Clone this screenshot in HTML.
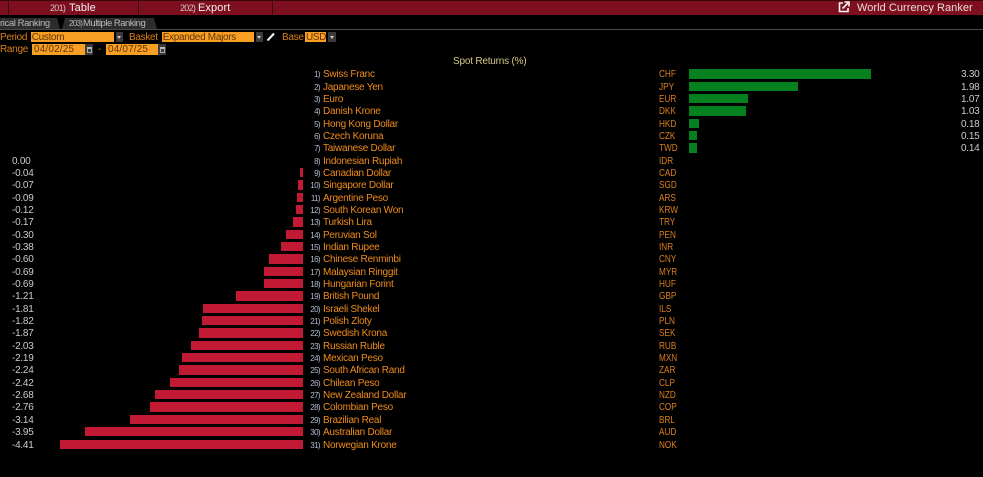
<!DOCTYPE html>
<html><head><meta charset="utf-8">
<style>
html,body{margin:0;padding:0;background:#000;}
#p{position:relative;width:983px;height:477px;overflow:hidden;background:#000;font-family:"Liberation Sans",sans-serif;font-size:10px;letter-spacing:-.25px;line-height:12px;white-space:nowrap;filter:blur(.25px);}
#p div,#p span{position:absolute;}
.l{color:#d9801a;letter-spacing:-.3px;}
.f{background:#f9a024;color:#5e3304;height:10.5px;line-height:12px;padding-left:1px;box-sizing:border-box;letter-spacing:-.3px;overflow:hidden;}
.d{background:#3a3a3a;width:7.5px;height:10.5px;}
.d:after{content:"";position:absolute;left:1.5px;top:4px;border-left:2.5px solid transparent;border-right:2.5px solid transparent;border-top:3px solid #ccc;}
.c{background:#3a3a3a;width:8px;height:10.5px;}
.c:after{content:"";position:absolute;left:1.5px;top:2.5px;width:3px;height:3px;border:1px solid #aaa;border-top:2px solid #bbb;}
.r{left:0;width:983px;height:12px;}
.n{left:303px;width:17px;text-align:right;color:#aebbd0;font-size:8px;letter-spacing:-.6px;top:-1px;}
.t{left:323px;color:#ef8c1c;top:-1px;}
.s{left:659px;color:#d97f1e;top:-1px;transform:scaleX(.82);transform-origin:0 0;letter-spacing:0;}
.vn{left:12px;color:#c8ccd0;top:-1px;}
.vp{left:961px;color:#c8ccd0;top:-1px;}
.b{top:-1px;height:9.4px;}
.R{background:#c21a35;right:680.3px;}
.G{background:#05801f;left:689px;}
</style></head><body><div id="p">
<div style="left:0;top:0;width:983px;height:15px;background:#7d0f1e;border-top:1px solid #3a060c;box-sizing:border-box;"></div>
<div style="left:8px;top:0;width:1px;height:15px;background:#40060e;"></div>
<div style="left:138px;top:0;width:1px;height:15px;background:#40060e;"></div>
<div style="left:272px;top:0;width:1px;height:15px;background:#40060e;"></div>
<span style="left:50px;top:2px;color:#d8c0c4;font-size:9px;letter-spacing:-.7px;">201)</span>
<span style="left:69px;top:2px;color:#f2f2f2;font-size:11px;letter-spacing:.1px;">Table</span>
<span style="left:180px;top:2px;color:#d8c0c4;font-size:9px;letter-spacing:-.7px;">202)</span>
<span style="left:198px;top:2px;color:#f2f2f2;font-size:11px;letter-spacing:.1px;">Export</span>
<svg style="position:absolute;left:838px;top:1px" width="12" height="12" viewBox="0 0 12 12"><path d="M5 2H1.5V10.5H10V7" fill="none" stroke="#f4f4f4" stroke-width="1.6"/><path d="M4.5 7.5L10 2M6.5 1H11V5.5" fill="none" stroke="#f4f4f4" stroke-width="1.6"/></svg>
<span style="left:857px;top:2px;color:#e8dcdc;font-size:11px;letter-spacing:.05px;">World Currency Ranker</span>
<div style="left:0;top:29px;width:983px;height:1px;background:#4a4a4a;"></div>
<div style="left:0;top:18px;width:60px;height:11px;background:#2c2c2c;clip-path:polygon(0 0,57px 0,60px 11px,0 11px);"></div>
<div style="left:62px;top:18px;width:95px;height:11px;background:#2c2c2c;clip-path:polygon(3px 0,92px 0,95px 11px,0 11px);"></div>
<span style="left:0;top:18px;color:#b8b8b8;font-size:9.5px;letter-spacing:-.4px;">rical Ranking</span>
<span style="left:69px;top:18px;color:#b4b4b4;font-size:8px;letter-spacing:-.7px;">203)</span>
<span style="left:83px;top:18px;color:#b8b8b8;font-size:9.5px;letter-spacing:-.5px;">Multiple Ranking</span>
<span class="l" style="left:0;top:31.5px;">Period</span>
<div class="f" style="left:30.7px;top:31.5px;width:83.5px;">Custom</div><div class="d" style="left:115.7px;top:31.5px;"></div>
<span class="l" style="left:129px;top:31.5px;">Basket</span>
<div class="f" style="left:161.7px;top:31.5px;width:92.5px;">Expanded Majors</div><div class="d" style="left:255.7px;top:31.5px;"></div>
<svg style="position:absolute;left:266px;top:31px" width="10" height="11" viewBox="0 0 10 11"><path d="M1.5 9.5L8 2.5" stroke="#eee" stroke-width="2.2" fill="none"/></svg>
<span class="l" style="left:282px;top:31.5px;">Base</span>
<div class="f" style="left:305px;top:31.5px;width:21px;">USD</div><div class="d" style="left:328px;top:31.5px;"></div>
<span class="l" style="left:0;top:44px;">Range</span>
<div class="f" style="left:32px;top:44.2px;width:53px;padding-left:2px;letter-spacing:.15px;">04/02/25</div><div class="c" style="left:85px;top:44.2px;"></div>
<span class="l" style="left:98px;top:44px;">-</span>
<div class="f" style="left:106px;top:44.2px;width:52px;padding-left:2px;letter-spacing:.15px;">04/07/25</div><div class="c" style="left:158px;top:44.2px;"></div>
<span style="left:453px;top:56px;color:#d6c98a;font-size:10px;letter-spacing:-.2px;">Spot Returns (%)</span>

<div class="r" style="top:70.3px"><span class="n">1)</span><span class="t">Swiss Franc</span><span class="s">CHF</span><span class="b G" style="width:181.5px"></span><span class="vp">3.30</span></div>
<div class="r" style="top:82.6px"><span class="n">2)</span><span class="t">Japanese Yen</span><span class="s">JPY</span><span class="b G" style="width:109px"></span><span class="vp">1.98</span></div>
<div class="r" style="top:94.9px"><span class="n">3)</span><span class="t">Euro</span><span class="s">EUR</span><span class="b G" style="width:58.8px"></span><span class="vp">1.07</span></div>
<div class="r" style="top:107.3px"><span class="n">4)</span><span class="t">Danish Krone</span><span class="s">DKK</span><span class="b G" style="width:56.7px"></span><span class="vp">1.03</span></div>
<div class="r" style="top:119.6px"><span class="n">5)</span><span class="t">Hong Kong Dollar</span><span class="s">HKD</span><span class="b G" style="width:10px"></span><span class="vp">0.18</span></div>
<div class="r" style="top:132px"><span class="n">6)</span><span class="t">Czech Koruna</span><span class="s">CZK</span><span class="b G" style="width:8.3px"></span><span class="vp">0.15</span></div>
<div class="r" style="top:144.3px"><span class="n">7)</span><span class="t">Taiwanese Dollar</span><span class="s">TWD</span><span class="b G" style="width:7.7px"></span><span class="vp">0.14</span></div>
<div class="r" style="top:156.6px"><span class="n">8)</span><span class="t">Indonesian Rupiah</span><span class="s">IDR</span><span class="vn">0.00</span></div>
<div class="r" style="top:169px"><span class="n">9)</span><span class="t">Canadian Dollar</span><span class="s">CAD</span><span class="b R" style="width:2.6px"></span><span class="vn">-0.04</span></div>
<div class="r" style="top:181.3px"><span class="n">10)</span><span class="t">Singapore Dollar</span><span class="s">SGD</span><span class="b R" style="width:4.5px"></span><span class="vn">-0.07</span></div>
<div class="r" style="top:193.6px"><span class="n">11)</span><span class="t">Argentine Peso</span><span class="s">ARS</span><span class="b R" style="width:5.3px"></span><span class="vn">-0.09</span></div>
<div class="r" style="top:206px"><span class="n">12)</span><span class="t">South Korean Won</span><span class="s">KRW</span><span class="b R" style="width:7px"></span><span class="vn">-0.12</span></div>
<div class="r" style="top:218.3px"><span class="n">13)</span><span class="t">Turkish Lira</span><span class="s">TRY</span><span class="b R" style="width:9.7px"></span><span class="vn">-0.17</span></div>
<div class="r" style="top:230.6px"><span class="n">14)</span><span class="t">Peruvian Sol</span><span class="s">PEN</span><span class="b R" style="width:17px"></span><span class="vn">-0.30</span></div>
<div class="r" style="top:243px"><span class="n">15)</span><span class="t">Indian Rupee</span><span class="s">INR</span><span class="b R" style="width:22px"></span><span class="vn">-0.38</span></div>
<div class="r" style="top:255.3px"><span class="n">16)</span><span class="t">Chinese Renminbi</span><span class="s">CNY</span><span class="b R" style="width:33.5px"></span><span class="vn">-0.60</span></div>
<div class="r" style="top:267.6px"><span class="n">17)</span><span class="t">Malaysian Ringgit</span><span class="s">MYR</span><span class="b R" style="width:38.4px"></span><span class="vn">-0.69</span></div>
<div class="r" style="top:280px"><span class="n">18)</span><span class="t">Hungarian Forint</span><span class="s">HUF</span><span class="b R" style="width:38.4px"></span><span class="vn">-0.69</span></div>
<div class="r" style="top:292.3px"><span class="n">19)</span><span class="t">British Pound</span><span class="s">GBP</span><span class="b R" style="width:67px"></span><span class="vn">-1.21</span></div>
<div class="r" style="top:304.6px"><span class="n">20)</span><span class="t">Israeli Shekel</span><span class="s">ILS</span><span class="b R" style="width:100px"></span><span class="vn">-1.81</span></div>
<div class="r" style="top:317px"><span class="n">21)</span><span class="t">Polish Zloty</span><span class="s">PLN</span><span class="b R" style="width:100.4px"></span><span class="vn">-1.82</span></div>
<div class="r" style="top:329.3px"><span class="n">22)</span><span class="t">Swedish Krona</span><span class="s">SEK</span><span class="b R" style="width:103.3px"></span><span class="vn">-1.87</span></div>
<div class="r" style="top:341.6px"><span class="n">23)</span><span class="t">Russian Ruble</span><span class="s">RUB</span><span class="b R" style="width:112px"></span><span class="vn">-2.03</span></div>
<div class="r" style="top:354px"><span class="n">24)</span><span class="t">Mexican Peso</span><span class="s">MXN</span><span class="b R" style="width:120.8px"></span><span class="vn">-2.19</span></div>
<div class="r" style="top:366.3px"><span class="n">25)</span><span class="t">South African Rand</span><span class="s">ZAR</span><span class="b R" style="width:123.5px"></span><span class="vn">-2.24</span></div>
<div class="r" style="top:378.6px"><span class="n">26)</span><span class="t">Chilean Peso</span><span class="s">CLP</span><span class="b R" style="width:132.7px"></span><span class="vn">-2.42</span></div>
<div class="r" style="top:391px"><span class="n">27)</span><span class="t">New Zealand Dollar</span><span class="s">NZD</span><span class="b R" style="width:147.4px"></span><span class="vn">-2.68</span></div>
<div class="r" style="top:403.3px"><span class="n">28)</span><span class="t">Colombian Peso</span><span class="s">COP</span><span class="b R" style="width:152.4px"></span><span class="vn">-2.76</span></div>
<div class="r" style="top:415.6px"><span class="n">29)</span><span class="t">Brazilian Real</span><span class="s">BRL</span><span class="b R" style="width:172.7px"></span><span class="vn">-3.14</span></div>
<div class="r" style="top:428px"><span class="n">30)</span><span class="t">Australian Dollar</span><span class="s">AUD</span><span class="b R" style="width:217.7px"></span><span class="vn">-3.95</span></div>
<div class="r" style="top:440.5px"><span class="n">31)</span><span class="t">Norwegian Krone</span><span class="s">NOK</span><span class="b R" style="width:242.7px"></span><span class="vn">-4.41</span></div>
</div></body></html>
